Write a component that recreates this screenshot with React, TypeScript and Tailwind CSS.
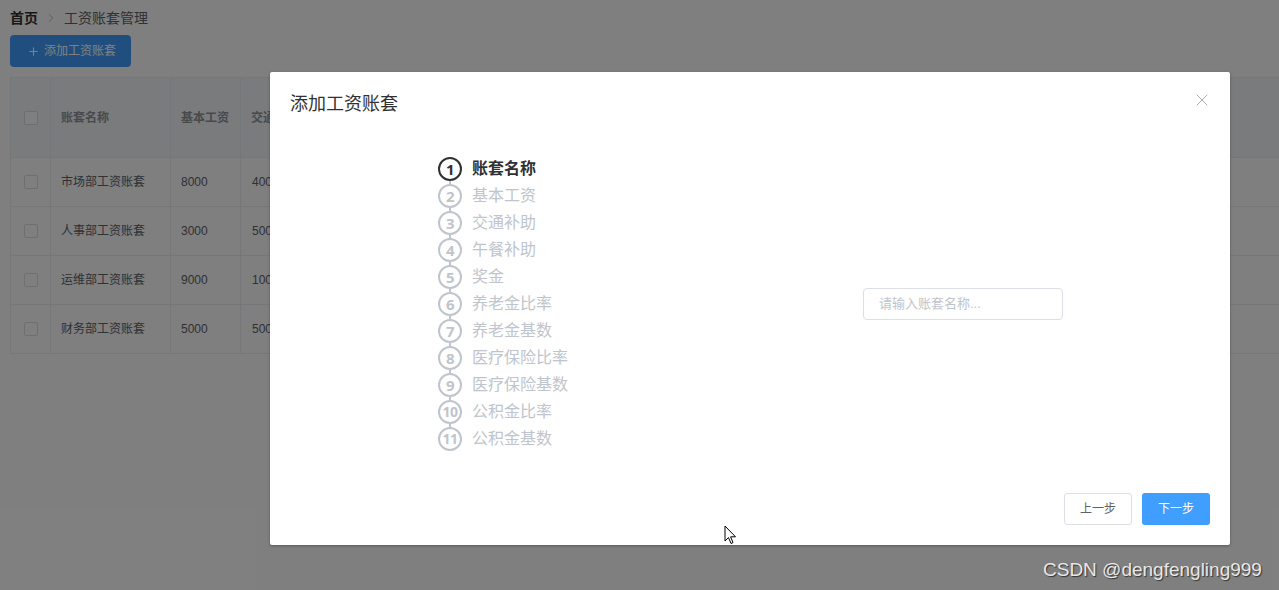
import { ChevronRight, Plus, X } from "lucide-react";

const font = { fontFamily: '"Liberation Sans", "Noto Sans CJK SC", sans-serif' };

const rows = [
  { name: "市场部工资账套", base: "8000", traffic: "400" },
  { name: "人事部工资账套", base: "3000", traffic: "500" },
  { name: "运维部工资账套", base: "9000", traffic: "100" },
  { name: "财务部工资账套", base: "5000", traffic: "500" },
];

const steps = [
  "账套名称",
  "基本工资",
  "交通补助",
  "午餐补助",
  "奖金",
  "养老金比率",
  "养老金基数",
  "医疗保险比率",
  "医疗保险基数",
  "公积金比率",
  "公积金基数",
];

const Checkbox = () => (
  <span className="block w-[14px] h-[14px] border border-[#dcdfe6] rounded-[2px] bg-white" />
);

const SalaryTable = () => (
  <div className="ml-[10px] mt-[10px] border-l border-t border-[#ebeef5] text-xs">
    <div className="flex h-[80px] bg-[#f5f7fa] text-[#909399] font-bold border-b border-[#ebeef5]">
      <div className="w-[40px] flex items-center justify-center border-r border-[#ebeef5]">
        <Checkbox />
      </div>
      <div className="w-[120px] flex items-center pl-[10px] border-r border-[#ebeef5]">账套名称</div>
      <div className="w-[70px] flex items-center pl-[10px] border-r border-[#ebeef5]">基本工资</div>
      <div className="w-[120px] flex items-center pl-[10px] border-r border-[#ebeef5]">交通补助</div>
      <div className="flex-1" />
    </div>
    {rows.map((r) => (
      <div key={r.name} className="flex h-[49px] bg-white text-[#606266] border-b border-[#ebeef5]">
        <div className="w-[40px] flex items-center justify-center border-r border-[#ebeef5]">
          <Checkbox />
        </div>
        <div className="w-[120px] flex items-center pl-[10px] border-r border-[#ebeef5]">{r.name}</div>
        <div className="w-[70px] flex items-center pl-[10px] border-r border-[#ebeef5]">{r.base}</div>
        <div className="w-[120px] flex items-center pl-[11px] border-r border-[#ebeef5]">{r.traffic}</div>
        <div className="flex-1" />
      </div>
    ))}
  </div>
);

const Steps = () => (
  <div className="flex flex-col">
    {steps.map((s, i) => {
      const active = i === 0;
      return (
        <div key={s} className="flex items-center h-[27px] relative">
          {i > 0 && (
            <span className="absolute left-[11px] top-[-2px] w-[2px] h-[4px] bg-[#c0c4cc]" />
          )}
          <span
            className={
              "w-[24px] h-[24px] rounded-full border-2 bg-white flex items-center justify-center font-bold leading-none tracking-[-0.5px] " +
              (i >= 9 ? "text-[14px] " : "text-[15px] ") +
              (active ? "border-[#303133] text-[#303133]" : "border-[#c0c4cc] text-[#c0c4cc]")
            }
            style={{ fontFamily: '"Noto Sans", "Liberation Sans", sans-serif' }}
          >
            {i + 1}
          </span>
          <span
            className={
              "ml-[10px] text-base " +
              (active ? "font-bold text-[#303133]" : "text-[#c0c4cc]")
            }
          >
            {s}
          </span>
        </div>
      );
    })}
  </div>
);

export default function App() {
  return (
    <div className="relative w-[1279px] h-[590px] overflow-hidden bg-white" style={font}>
      <div className="flex items-center h-[36px] pl-[10px] text-sm">
        <span className="font-bold text-[#303133]">首页</span>
        <ChevronRight size={14} strokeWidth={1.5} className="mx-[6px] text-[#b0b3b9]" />
        <span className="text-[#606266]">工资账套管理</span>
      </div>
      <button className="ml-[10px] -mt-[1px] flex items-center w-[121px] h-[32px] pl-[17px] rounded-[4px] bg-[#409eff] text-white text-xs">
        <Plus size={13} className="mr-[4px]" />
        添加工资账套
      </button>
      <SalaryTable />

      <div className="absolute inset-0 bg-black/50" />

      <div className="absolute left-[270px] top-[72px] w-[960px] h-[473px] bg-white rounded-[2px] shadow-[0_1px_3px_rgba(0,0,0,0.3)] flex flex-col">
        <div className="relative flex items-start pl-[20px] pt-[20px] h-[64px]">
          <span className="text-lg leading-6 text-[#303133]">添加工资账套</span>
          <X
            size={20}
            strokeWidth={1.1}
            className="absolute right-[18px] top-[18px] text-[#a0a3a9]"
          />
        </div>
        <div className="flex items-center flex-1 pl-[168px] pb-[21px]">
          <div className="w-[425px]">
            <Steps />
          </div>
          <div className="w-[200px] h-[32px] border border-[#dcdfe6] rounded-[4px] flex items-center pl-[15px] text-[13px] text-[#c0c4cc]">
            请输入账套名称...
          </div>
        </div>
        <div className="flex justify-end gap-[10px] pr-[20px] pb-[20px]">
          <button className="w-[68px] h-[32px] border border-[#dcdfe6] rounded-[3px] bg-white text-xs text-[#606266]">
            上一步
          </button>
          <button className="w-[68px] h-[32px] rounded-[3px] bg-[#409eff] text-xs text-white">
            下一步
          </button>
        </div>
      </div>

      <svg className="absolute left-[724px] top-[525px]" width="13" height="20" viewBox="0 0 13 20">
        <path d="M1 1 L1 16 L4.5 12.5 L7 18.5 L9 17.6 L6.6 11.8 L11.5 11.8 Z" fill="white" stroke="black" strokeWidth="1" />
      </svg>

      <div
        className="absolute left-[1043px] top-[556px] text-[19px] text-[#e8e8e8] [text-shadow:1px_1px_1px_rgba(0,0,0,0.6)]"
        style={{ fontFamily: '"Liberation Sans", Arial, sans-serif' }}
      >
        CSDN @dengfengling999
      </div>
    </div>
  );
}
